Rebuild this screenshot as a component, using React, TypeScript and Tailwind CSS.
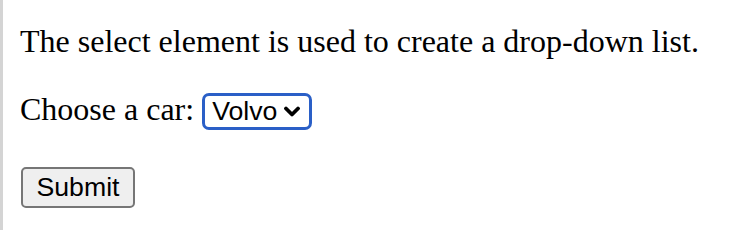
import React from "react";

export default function App() {
  return (
    <div className="flex w-[734px] h-[230px] bg-white overflow-hidden">
      <div className="w-[3px] shrink-0 bg-[#d4d4d4]" />
      <div className="flex flex-col pl-[17px] pt-[23px] text-black">
        <p className="font-['Liberation_Serif','Times_New_Roman',serif] text-[32px] leading-[36px] whitespace-nowrap">
          The select element is used to create a drop-down list.
        </p>
        <div className="mt-[32px] flex items-baseline gap-[8px] font-['Liberation_Serif','Times_New_Roman',serif] text-[32px] leading-[36px] whitespace-nowrap">
          <label htmlFor="cars">Choose a car:</label>
          <div
            id="cars"
            className="flex items-center h-[37px] box-border border-[3px] border-[#2a5fc7] rounded-[7px] pl-[7px] pr-[9px] font-['Liberation_Sans',Arial,sans-serif] text-[26.67px] leading-[30px]"
          >
            <span>Volvo</span>
            <svg width="16" height="11" viewBox="0 0 16 11" className="ml-[7px]" aria-hidden="true">
              <path d="M2 2.5 L8 8.5 L14 2.5" fill="none" stroke="black" strokeWidth="3.8" strokeLinecap="round" strokeLinejoin="round" />
            </svg>
          </div>
        </div>
        <div className="mt-[37px] flex">
          <button
            type="submit"
            className="ml-[1px] w-[114px] h-[41px] box-border border-2 border-[#767676] rounded-[5px] bg-[#efefef] font-['Liberation_Sans',Arial,sans-serif] text-[26.67px] leading-[30px] text-black flex items-center justify-center"
          >
            Submit
          </button>
        </div>
      </div>
    </div>
  );
}
